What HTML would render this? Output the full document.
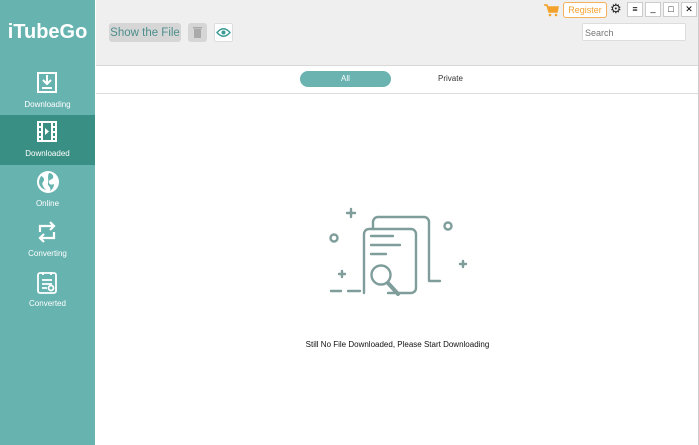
<!DOCTYPE html>
<html><head><style>
body{margin:0;width:699px;height:445px;overflow:hidden;font-family:"Liberation Sans",sans-serif;background:#fff;position:relative}
.side{position:absolute;left:0;top:0;width:95px;height:445px;background:#67b3b0}
.logo{position:absolute;top:21px;left:0;width:95px;text-align:center;color:#fff;font-size:20px;font-weight:bold}
.item{position:absolute;left:0;width:95px;height:50px;color:#fff;font-size:8px;text-align:center}
.item span{position:absolute;left:0;right:0;bottom:7px}
.item svg{position:absolute;left:36px;top:5px}
.sel{background:#3a8f84}
.top{position:absolute;left:96px;top:0;right:0;height:65px;background:#efefef;border-bottom:1px solid #d8d8d8}
.tabs{position:absolute;left:96px;top:66px;right:0;height:27px;border-bottom:1px solid #ddd}
.border{position:absolute;right:0;top:0;width:1px;height:445px;background:#ccc}
</style></head><body>
<div class="side">
<div class="logo">iTubeGo</div>
<div class="item" style="top:66px"><svg width="22" height="24" viewBox="0 0 22 24" fill="none" stroke="#fff" stroke-width="2"><rect x="2" y="2" width="18" height="19"/><path d="M11 4v9M7 9l4 4 4-4M6 17h10" /></svg><span>Downloading</span></div>
<div class="item sel" style="top:115px"><svg width="22" height="24" viewBox="0 0 22 24" fill="none" stroke="#fff" stroke-width="2"><rect x="2" y="2" width="18" height="19"/><path d="M6 2v19M16 2v19M2 7h4M2 12h4M2 17h4M16 7h4M16 12h4M16 17h4"/><path d="M9 8l4 3.5-4 3.5z" fill="#fff" stroke="none"/></svg><span>Downloaded</span></div>
<div class="item" style="top:165px"><svg width="24" height="24" viewBox="0 0 24 24"><circle cx="12" cy="12" r="11" fill="#fff"/><path d="M5 6c3 1 4 4 2 6s1 6 3 8c-4-1-7-4-7-8 0-2 1-4 2-6zM13 3c3 0 5 3 4 5s-4 1-4 4 3 3 5 2c0 3-2 6-4 7 2-4-3-5-2-8s-1-6 1-10z" fill="#67b3b0"/></svg><span>Online</span></div>
<div class="item" style="top:215px"><svg width="22" height="24" viewBox="0 0 22 24" fill="none" stroke="#fff" stroke-width="2.2"><path d="M4 12V6h13M14 2l4 4-4 4M18 12v6H5M8 14l-4 4 4 4"/></svg><span>Converting</span></div>
<div class="item" style="top:265px"><svg width="22" height="24" viewBox="0 0 22 24" fill="none" stroke="#fff" stroke-width="1.8"><rect x="2" y="3" width="18" height="20" rx="2"/><path d="M7 2v3M15 2v3M6 10h10M6 14h10M6 18h5"/><circle cx="15" cy="18" r="2.5"/></svg><span>Converted</span></div>
</div>
<div class="top">
<div style="position:absolute;left:13px;top:23px;width:72px;height:19px;background:#d6d6d6;border-radius:3px;color:#4d8e8c;font-size:11.5px;line-height:20px;text-align:center">Show the File</div>
<div style="position:absolute;left:92px;top:23px;width:19px;height:19px;background:#d6d6d6;border-radius:3px"><svg width="19" height="19"><rect x="6" y="6" width="7" height="9" fill="#aaa"/><rect x="5" y="4" width="9" height="1.5" fill="#aaa"/></svg></div>
<div style="position:absolute;left:118px;top:23px;width:19px;height:19px;background:#fff;border:1px solid #ddd;border-radius:2px;box-sizing:border-box"><svg width="17" height="17"><path d="M2 8.5Q8.5 1 15 8.5Q8.5 16 2 8.5z" fill="none" stroke="#3a9a94" stroke-width="1.4"/><circle cx="8.5" cy="8.5" r="2" fill="#3a9a94"/></svg></div>
<svg style="position:absolute;left:447px;top:3px" width="16" height="14"><path d="M1 2h3l2 7h8l1-5H5" fill="#f4a12c" stroke="#f4a12c" stroke-width="1.5"/><circle cx="7" cy="12" r="1.3" fill="#f4a12c"/><circle cx="13" cy="12" r="1.3" fill="#f4a12c"/></svg>
<div style="position:absolute;left:467px;top:2px;width:42px;height:14px;border:1px solid #f4b05a;border-radius:3px;background:#fff;color:#f4a12c;font-size:9px;line-height:14px;text-align:center">Register</div>
<div style="position:absolute;left:514px;top:1px;font-size:13px;color:#222">⚙</div>
<div style="position:absolute;left:531px;top:2px;width:14px;height:13px;border:1px solid #ccc;background:#fff;font-size:9px;text-align:center;line-height:13px">≡</div>
<div style="position:absolute;left:549px;top:2px;width:14px;height:13px;border:1px solid #ccc;background:#fff;font-size:9px;text-align:center;line-height:11px">_</div>
<div style="position:absolute;left:567px;top:2px;width:14px;height:13px;border:1px solid #ccc;background:#fff;font-size:9px;text-align:center;line-height:13px">□</div>
<div style="position:absolute;left:585px;top:2px;width:14px;height:13px;border:1px solid #ccc;background:#fff;font-size:9px;text-align:center;line-height:13px">✕</div>
<div style="position:absolute;left:486px;top:23px;width:104px;height:18px;background:#fff;border:1px solid #ddd;border-radius:2px;color:#777;font-size:9px;line-height:18px;padding-left:2px;box-sizing:border-box">Search</div>
</div>
<div class="tabs">
<div style="position:absolute;left:204px;top:5px;width:91px;height:16px;background:#6ab3b1;border-radius:8px;color:#fff;font-size:8px;line-height:16px;text-align:center">All</div>
<div style="position:absolute;left:342px;top:5px;font-size:8px;line-height:16px;color:#333">Private</div>
</div>
<svg style="position:absolute;left:320px;top:200px" width="160" height="110" fill="none" stroke="#7f9d9b" stroke-width="2.4" stroke-linecap="round">
<path d="M31 9v8M27 13h8M22 71v6M19 74h6M143 61v6M140 64h6"/>
<circle cx="14" cy="38" r="3.5"/><circle cx="128" cy="26" r="3.5"/>
<path d="M11 91h10M28 91h12M110 81h10"/>
<path d="M53 28v-6a5 5 0 0 1 5-5h46a5 5 0 0 1 5 5v59"/>
<path d="M44 93V34a5 5 0 0 1 5-5h42a5 5 0 0 1 5 5v54a5 5 0 0 1-5 5H68"/>
<path d="M51 36h22M51 45h29M51 54h15"/>
<circle cx="61" cy="75" r="9.5"/><path d="M68 83l10 11" stroke-width="4"/>
</svg>
<div style="position:absolute;left:96px;right:0;top:340px;text-align:center;font-size:8px;color:#111">Still No File Downloaded, Please Start Downloading</div>
<div class="border"></div>
</body></html>
